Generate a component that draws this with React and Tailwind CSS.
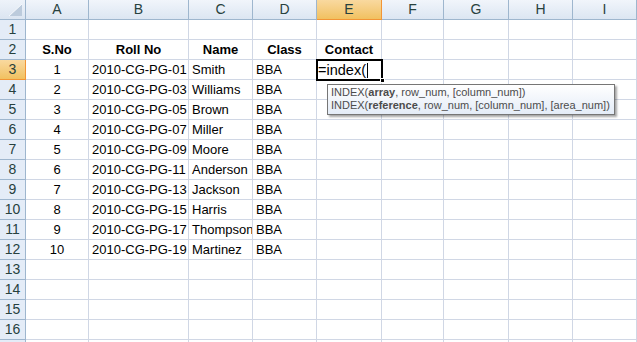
import React from "react";

/* column widths taken from the sheet */
const cols = ["A", "B", "C", "D", "E", "F", "G", "H", "I"];

const students = [
  [1, "2010-CG-PG-01", "Smith"],
  [2, "2010-CG-PG-03", "Williams"],
  [3, "2010-CG-PG-05", "Brown"],
  [4, "2010-CG-PG-07", "Miller"],
  [5, "2010-CG-PG-09", "Moore"],
  [6, "2010-CG-PG-11", "Anderson"],
  [7, "2010-CG-PG-13", "Jackson"],
  [8, "2010-CG-PG-15", "Harris"],
  [9, "2010-CG-PG-17", "Thompson"],
  [10, "2010-CG-PG-19", "Martinez"],
];

const cellBase =
  "border-r border-b border-[#d0d7e5] overflow-hidden whitespace-nowrap leading-[19px] text-[13px] text-black";

function RowHeader({ n, active }) {
  return (
    <div
      className={
        active
          ? "border-r border-b border-[#f29536] bg-gradient-to-b from-[#f9d99f] to-[#f1c15f] text-[#27413e] text-[14px] leading-[19px] text-center"
          : "border-r border-b border-[#9eb6ce] bg-[#e4ecf7] text-[#27413e] text-[14px] leading-[19px] text-center"
      }
    >
      {n}
    </div>
  );
}

function Cell({ children, className = "" }) {
  return <div className={`${cellBase} ${className}`}>{children}</div>;
}

export default function App() {
  const rows = [];

  for (let r = 1; r <= 17; r++) {
    const cells = [];
    if (r === 2) {
      cells.push(
        <Cell key="a" className="text-center font-bold">S.No</Cell>,
        <Cell key="b" className="text-center font-bold">Roll No</Cell>,
        <Cell key="c" className="text-center font-bold">Name</Cell>,
        <Cell key="d" className="text-center font-bold">Class</Cell>,
        <Cell key="e" className="text-center font-bold">Contact</Cell>
      );
      for (let i = 0; i < 4; i++) cells.push(<Cell key={"x" + i} />);
    } else if (r >= 3 && r <= 12) {
      const s = students[r - 3];
      cells.push(
        <Cell key="a" className="text-center">{s[0]}</Cell>,
        <Cell key="b" className="pl-[3px]">{s[1]}</Cell>,
        <Cell key="c" className="pl-[3px]">{s[2]}</Cell>,
        <Cell key="d" className="pl-[3px]">BBA</Cell>
      );
      if (r === 3) {
        cells.push(
          <div key="e" className="relative border-r border-b border-[#d0d7e5] text-[13px] leading-[19px]">
            {/* active cell frame */}
            <div className="absolute -left-[1px] -top-[1px] w-[67px] h-[22px] border-2 border-black z-10">
              <span className="absolute left-0 top-0 text-[14.5px] leading-[19px] text-black whitespace-nowrap">
                =index(
              </span>
              <span className="absolute left-[49px] top-[2px] w-px h-[15px] bg-black" />
              <span className="absolute -right-[4px] -bottom-[4px] w-[5px] h-[5px] bg-black border border-white" />
            </div>
          </div>
        );
      } else {
        cells.push(<Cell key="e" />);
      }
      for (let i = 0; i < 4; i++) cells.push(<Cell key={"x" + i} />);
    } else {
      for (let i = 0; i < 9; i++) cells.push(<Cell key={"x" + i} />);
    }

    rows.push(
      <React.Fragment key={r}>
        <RowHeader n={r <= 16 ? r : ""} active={r === 3} />
        {cells}
      </React.Fragment>
    );
  }

  return (
    <div
      className="relative w-[637px] h-[342px] overflow-hidden bg-white"
      style={{ fontFamily: '"Liberation Sans", Arial, sans-serif' }}
    >
      <div className="grid grid-cols-[26px_63px_100px_64px_64px_65px_62px_65px_64px_64px] auto-rows-[20px]">
        {/* corner */}
        <div className="relative border-r border-b border-[#9eb6ce] bg-gradient-to-b from-[#eef3fa] to-[#dbe5f1]">
          <svg className="absolute right-[2px] bottom-[3px]" width="14" height="12" viewBox="0 0 14 12">
            <polygon points="13,0 13,12 0,12" fill="#bccbdc" />
            <polyline points="13,0 0,12" stroke="#f6f9fc" strokeWidth="1" fill="none" />
          </svg>
        </div>

        {/* column headers */}
        {cols.map((c) => (
          <div
            key={c}
            className={
              c === "E"
                ? "border-r border-b border-[#f29536] bg-gradient-to-b from-[#f9d99f] to-[#f1c15f] text-[#27413e] text-[14px] leading-[19px] text-center"
                : "border-r border-b border-[#9eb6ce] bg-gradient-to-b from-[#f1f5fb] to-[#dce6f2] text-[#27413e] text-[14px] leading-[19px] text-center"
            }
          >
            {c}
          </div>
        ))}

        {rows}
      </div>

      {/* function tooltip */}
      <div className="absolute left-[327px] top-[84px] z-20 border border-[#767676] bg-gradient-to-b from-white to-[#e4ecf7] pl-[3px] pr-[4px] pt-[1px] pb-[2px] text-[11px] leading-[13px] text-[#4c4c4c] shadow-[2px_2px_2px_rgba(0,0,0,0.35)] whitespace-nowrap">
        <div>
          INDEX(<span className="font-bold">array</span>, row_num, [column_num])
        </div>
        <div>
          INDEX(<span className="font-bold">reference</span>, row_num, [column_num], [area_num])
        </div>
      </div>
    </div>
  );
}
